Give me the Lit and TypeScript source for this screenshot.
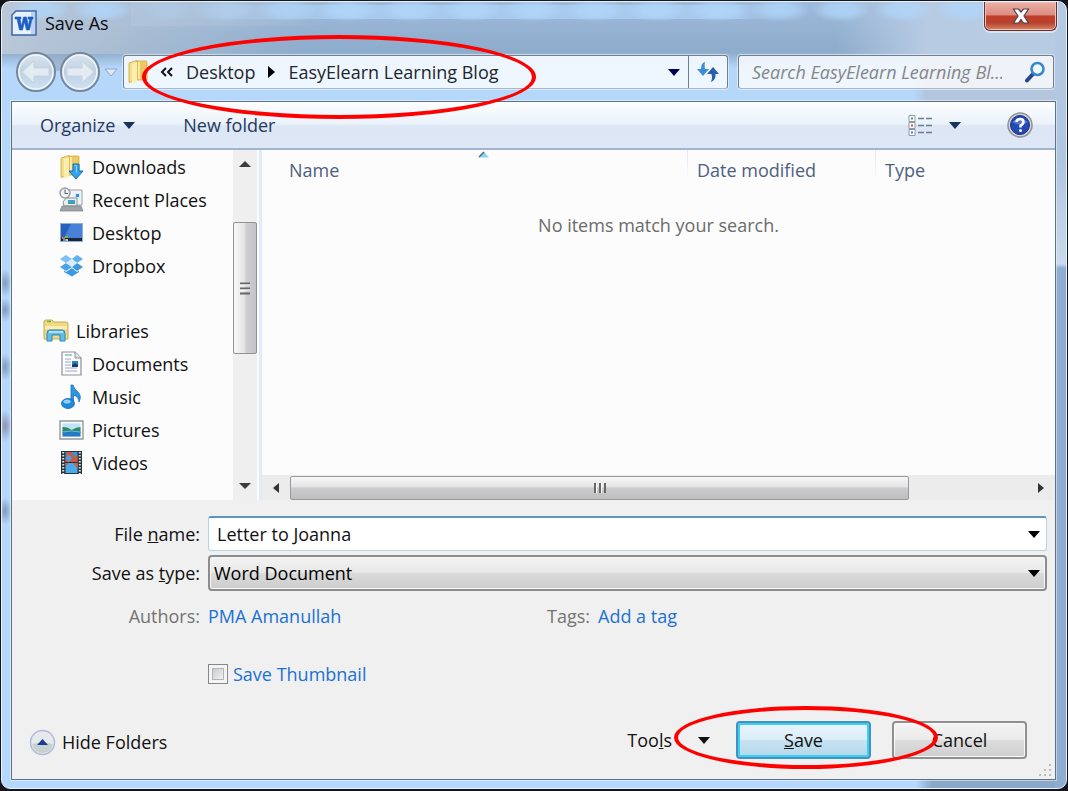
import { LitElement, html, css, svg } from "lit";
import { customElement, property, state } from "lit/decorators.js";
import { classMap } from "lit/directives/class-map.js";

const folder = svg`
  <path d="M2 4 10 1.500V21L2 23.500Z" fill="#f6df86" stroke="#c9a640" stroke-width=".8"/>
  <path d="M10 2H19Q20 2 20 3V21H10Z" fill="#ecca5f" stroke="#d0ac48" stroke-width=".8"/>
  <path d="M5 5 10 3V23L5 24.500Z" fill="#fbeeb0"/>
  <path d="M12 3v17" stroke="#fff3bf" stroke-width="1.500"/>`;

const icons: Record<string, unknown> = {
  folder,
  downloads: svg`${folder}
    <path d="M14 10h6v7h4l-7 8-7-8h4z" fill="#36a3ee" stroke="#1769b4" stroke-width="1"/>
    <path d="M15.500 11.500h2v7" stroke="#8fd4ff" fill="none"/>`,
  recent: svg`
    <path d="M9 3h14v15H9z" fill="#f2f4f5" stroke="#9a9fa3"/>
    <path d="M15 6h6v6h-6z" fill="#dcecf7"/><path d="M17 7h3v3h-3z" fill="#2c8fd8"/>
    <path d="M4 15 7 11H18v8H5z" fill="#e9eef0" stroke="#8d9498"/>
    <path d="M9 13h7v4H9z" fill="#3f9fd0"/><path d="M9 16h7v1H9z" fill="#3fa36c"/>
    <path d="M3 19h19l2 5H1z" fill="#9da3a7" stroke="#7d8387" stroke-width=".7"/>
    <circle cx="6" cy="6" r="5" fill="#f1f3f4" stroke="#9a9fa3" stroke-width="1.500"/>
    <path d="M6 2.500V6.500H9" stroke="#4c5c74" fill="none"/>`,
  desktop: svg`
    <path d="M1 3h23v19H1z" fill="#8db0d8"/><path d="M2 4h21v14H2z" fill="#2a5fc0"/>
    <path d="M12 4h11v14H5z" fill="#5b93e2" opacity=".65"/>
    <path d="M2 18h21v3H2z" fill="#1d2733"/><path d="M3 17h3v2H3z" fill="#e4683a"/>
    <path d="M6 16h3v2H6z" fill="#6cc04a"/><path d="M4 19h3v2H4z" fill="#37a1ef"/><path d="M7 19h2v2H7z" fill="#f3c63e"/>`,
  dropbox: svg`
    <path d="M7 2 13 6 7 10 1 6Z" fill="#7fc0f3"/><path d="M18 2 24 6 18 10 13 6Z" fill="#5fb0ee"/>
    <path d="M7 10 13 14 7 18 1 14Z" fill="#4aa3e8"/><path d="M18 10 24 14 18 18 13 14Z" fill="#3d97e0"/>
    <path d="M13 6 18 10 13 14 7 10Z" fill="#d6ecfb"/>
    <path d="M5 17.500 7 19 13 15 18 19 20 17.500V19L13 23.500 5 19Z" fill="#3c99e4"/>`,
  libraries: svg`
    <path d="M1 4Q1 2 3 2H9L11 4H23Q25 4 25 6V21H1Z" fill="#f1d983" stroke="#c8aa50"/>
    <path d="M2 8h22v3H2z" fill="#fbeeb5"/><path d="M4 3.500h4" stroke="#69bb3c" stroke-width="1.500"/>
    <path d="M4 23V15Q4 12 7 12H19Q22 12 22 15V23H17V17H9V23Z" fill="#63bde8" stroke="#2d87bd"/>
    <path d="M6 14h14" stroke="#c8ecfb" stroke-width="1.500"/>`,
  documents: svg`
    <path d="M3 1H16L22 7V24H3Z" fill="#fdfdfe" stroke="#8b9095" stroke-width="1.200"/>
    <path d="M16 1V7H22" fill="#dfe4e8" stroke="#8b9095"/>
    <path d="M6 8h6M6 11h6M6 14h6M6 17h12M6 20h12" stroke="#99a6c4"/>
    <path d="M6 4h7" stroke="#45a09e"/><path d="M13 10h6v6h-6z" fill="#2583c6"/><path d="M13 14l3-2 3 2v2h-6z" fill="#173f6b"/>`,
  music: svg`
    <path d="M12 19V1H14Q15 5 19 8 23 12 20 18 20 13 14.500 11V19Z" fill="#2f95dc" stroke="#1b74bb" stroke-width=".8"/>
    <ellipse cx="9" cy="19.500" rx="6.500" ry="5" fill="#218ad8" stroke="#1769b4" stroke-width=".8"/>
    <ellipse cx="8" cy="17.500" rx="3.500" ry="2" fill="#8bd0f6"/>`,
  pictures: svg`
    <path d="M1 4h23v18H1z" fill="#fafafa" stroke="#94999d" stroke-width="1.400"/>
    <path d="M3.500 6.500h18v13h-18z" fill="#bfe4f8"/><path d="M3.500 10q6 0 9 3 5-3 9-3v6h-18z" fill="#2f8a63"/>
    <path d="M3.500 15h18v4.500h-18z" fill="#2479c4"/><path d="M3.500 15q9-2 18 0" stroke="#69b8e8" fill="none"/>`,
  videos: svg`
    <path d="M2 1h21v23H2z" fill="#2b3237"/><path d="M6.500 2h12v10h-12z" fill="#3d93d8"/>
    <path d="M6.500 13h12v10h-12z" fill="#4aa8ec"/>
    <path d="M8 2h5l2 5 3.500-2v7h-12V8z" fill="#c65b42"/><path d="M9 4l4 4-3 4-3.500-3z" fill="#4f9fe0"/>
    <path d="M14 13h4.500v6l-2-3zM6.500 13h3l-3 4z" fill="#d0614a"/>
    <path d="M4.200 2v22M20.800 2v22" stroke="#d5ece4" stroke-width="2" stroke-dasharray="1.500 1.500"/>`,
};

@customElement("folder-icon")
class FolderIcon extends LitElement {
  @property() name = "";
  static styles = css`
    :host { display: block; width: 26px; height: 26px; flex: none; }
    svg { display: block; }
  `;
  render() {
    return html`<svg width="26" height="26" viewBox="0 0 26 26" aria-hidden="true">${icons[this.name]}</svg>`;
  }
}

interface Place { id: string; label: string; depth: number; gap?: boolean }

const places: Place[] = [
  { id: "downloads", label: "Downloads", depth: 1 },
  { id: "recent", label: "Recent Places", depth: 1 },
  { id: "desktop", label: "Desktop", depth: 1 },
  { id: "dropbox", label: "Dropbox", depth: 1 },
  { id: "libraries", label: "Libraries", depth: 0, gap: true },
  { id: "documents", label: "Documents", depth: 1 },
  { id: "music", label: "Music", depth: 1 },
  { id: "pictures", label: "Pictures", depth: 1 },
  { id: "videos", label: "Videos", depth: 1 },
];

const caret = html`<svg class="caret" width="12" height="7" viewBox="0 0 12 7" aria-hidden="true"><path d="M0 0H12L6 7Z" fill="currentColor"/></svg>`;

@customElement("app-root")
class AppRoot extends LitElement {
  @state() private fileName = "Letter to Joanna";

  static styles = css`
    :host {
      display: flex; min-height: 100vh; box-sizing: border-box; padding: 1px 1px 2px;
      background: #15151c; font: 18px/24px "Open Sans", "Noto Sans", sans-serif; color: #111;
    }
    * { box-sizing: border-box; }
    button, input, select { font: inherit; color: inherit; margin: 0; padding: 0; border: 0; background: none; }
    button { display: flex; align-items: center; cursor: pointer; }
    svg { display: block; flex: none; }
    a { color: #1c70d4; text-decoration: none; }
    .window {
      flex: 1; min-width: 0; display: flex; flex-direction: column; padding: 0 10px 8px 9px;
      border: 1px solid #e9f1f9; border-radius: 9px;
      background:
        radial-gradient(ellipse 7px 14px at 3px 281px, #7f9cba, transparent) no-repeat left top / 9px 100%,
        radial-gradient(ellipse 7px 12px at 3px 308px, #7f9cba, transparent) no-repeat left top / 9px 100%,
        radial-gradient(ellipse 7px 14px at 3px 365px, #7f9cba, transparent) no-repeat left top / 9px 100%,
        radial-gradient(ellipse 7px 16px at 3px 424px, #8c93ae, transparent) no-repeat left top / 9px 100%,
        radial-gradient(ellipse 7px 14px at 3px 509px, #7f9cba, transparent) no-repeat left top / 9px 100%,
        linear-gradient(#b4cae3, #b4cae3 30px, #b0c6df 160px, #c9daec 262px, #8fadcf 266px) right top / 11px 100% no-repeat,
        linear-gradient(90deg, transparent, #8aa8c9 16px) right bottom / 150px 9px no-repeat,
        linear-gradient(90deg, transparent, #b7cbe3 90px) right top / 230px 54px no-repeat,
        linear-gradient(90deg, transparent, #b4c6dd 12px) right 54px / 152px 46px no-repeat,
        linear-gradient(90deg, #b9c7d7, rgba(180, 196, 214, 0) 300px) left top / 100% 52px no-repeat,
        linear-gradient(#9dbbdb, #96b3d3 24px, #8dabcb 50px, #b5d7fa 66px, #b5d8fe);
    }
    .titlebar {
      display: flex; align-items: flex-start; justify-content: space-between; height: 53px;
      background:
        linear-gradient(90deg, rgba(176, 196, 218, .9), transparent 200px) 120px 0 / 240px 24px no-repeat,
        radial-gradient(ellipse 30px 12px at 50% 40%, rgba(176, 214, 250, .85), rgba(176, 214, 250, .7) 50%, transparent) 130px 0 / 59px 20px space no-repeat,
        linear-gradient(90deg, transparent, rgba(172, 209, 244, .75) 200px, rgba(172, 209, 244, .75) calc(100% - 40px), transparent) 120px 3px / calc(100% - 400px) 14px no-repeat;
    }
    .title { display: flex; align-items: center; gap: 8px; margin: 0; padding-top: 8px; font: inherit; color: #0c0c10; }
    .close {
      width: 73px; height: 29px; justify-content: center; margin-right: -1px;
      border: 1px solid #63302f; border-top: 0; border-radius: 0 0 6px 6px;
      background: linear-gradient(#eab0a6, #dd8c80 46%, #c23c29 50%, #b8432f 75%, #d58869);
      box-shadow: inset 0 0 0 1px #f0c2b8, 0 1px 0 1px rgba(255, 255, 255, .5);
    }
    .nav { display: flex; align-items: center; height: 34px; padding-right: 2px; }
    .history { display: flex; align-items: center; width: 112px; margin: -4px 0; }
    .field {
      display: flex; align-items: center; height: 34px; min-width: 0;
      border: 1px solid #727f8e; border-bottom-color: #a9b9cc; border-radius: 3px;
      background: rgba(243, 249, 255, .92); box-shadow: 0 0 0 1px rgba(255, 255, 255, .5);
    }
    .address { position: relative; flex: 1; color: #22262c; }
    .crumbs { display: flex; align-items: center; flex: 1; min-width: 0; gap: 13px; padding-left: 3px; }
    .crumbs button { white-space: nowrap; }
    .chevrons { margin-left: -6px; }
    .drop { padding: 12px 8px; color: #000052; }
    .refresh { height: 32px; width: 39px; justify-content: center; border-left: 1px solid #727f8e; }
    .search { flex: 0 1 316px; margin-left: 10px; padding: 0 7px 0 13px; gap: 6px; background: rgba(248, 250, 253, .86); }
    .search input { flex: 1; min-width: 0; height: 30px; font-style: italic; outline: none; }
    .search input::placeholder { color: #83868b; opacity: 1; }
    .client { flex: 1; display: flex; flex-direction: column; margin-top: 12px; border: 1px solid #5f7186; background: #f0f0f0; box-shadow: 0 0 0 1px rgba(255, 255, 255, .45); }
    .toolbar {
      display: flex; align-items: center; height: 48px; padding: 0 22px 0 28px; color: #26395f;
      border-bottom: 2px solid #a3b5ce;
      background: linear-gradient(#fdfeff, #eaf2fa 48%, #dce6f4 52%, #dde7f5);
    }
    .toolbar button { gap: 8px; }
    .toolbar .caret { color: #17335c; }
    .new { margin-left: 48px; }
    .views { margin-left: auto; margin-right: 46px; }
    .views .caret { margin-left: 8px; }
    .panes { display: flex; height: 350px; background: #fcfcfc; }
    .places { width: 221px; flex: none; margin: 0; padding: 0; list-style: none; }
    .place button { height: 33px; gap: 7px; padding-left: 47px; width: 100%; }
    .root button { padding-left: 31px; }
    .gap { margin-top: 32px; }
    .vscroll { display: flex; flex-direction: column; align-items: center; width: 24px; background: #efefef; }
    .vscroll .arrow { height: 28px; justify-content: center; }
    .vtrack { flex: 1; width: 100%; padding-top: 44px; }
    .vthumb {
      display: flex; align-items: center; justify-content: center; height: 132px;
      border: 1px solid #8f9194; border-radius: 2px; background: linear-gradient(90deg, #f7f7f7, #e6e6e8 45%, #cfcfd3 55%, #c3c3c8);
    }
    .list { flex: 1; min-width: 0; display: flex; flex-direction: column; margin-left: 2px; border-left: 3px solid #dfebf8; }
    table { width: 100%; table-layout: fixed; border-collapse: collapse; }
    .name { width: 425px; } .date { width: 188px; }
    th {
      height: 32px; padding: 8px 0 0 10px; text-align: left; font-weight: 400; color: #4c607f;
      background: linear-gradient(#dce8f6, #fcfcfc) left top / 1px 100% no-repeat;
    }
    th:first-child { position: relative; padding-left: 27px; background: none; }
    .sort { position: absolute; top: 1px; left: 216px; }
    td { padding: 31px 0 0; text-align: center; color: #6b6b6b; }
    .hscroll { display: flex; align-items: center; height: 25px; margin-top: auto; background: #ececec; }
    .hscroll .arrow { justify-content: center; width: 28px; height: 24px; }
    .htrack { flex: 1; }
    .hthumb {
      display: flex; align-items: center; justify-content: center; width: 84%; height: 24px;
      border: 1px solid #98999b; border-radius: 2px; background: linear-gradient(#f6f6f6, #e4e4e5 45%, #cbcbcd 50%, #bfbfc2);
    }
    .form { display: grid; grid-template-columns: 188px minmax(0, 1fr); column-gap: 8px; row-gap: 4px; padding: 16px 8px 0 0; align-items: center; }
    .label { text-align: right; white-space: nowrap; }
    .muted { color: #737373; }
    .combo { display: flex; align-items: center; height: 35px; border: 1px solid #b5d3ea; border-top: 2px solid #5c94c2; border-radius: 3px; background: #fff; }
    .combo input { flex: 1; min-width: 0; height: 30px; padding-left: 8px; outline: none; }
    .combo button { padding: 10px 6px; color: #000; }
    .type { display: grid; align-items: center; color: #000; }
    .type select {
      grid-area: 1 / 1; appearance: none; width: 100%; height: 36px; padding-left: 4px;
      border: 2px solid #8c8c8c; border-radius: 4px; background: linear-gradient(#f3f3f3, #e8e8e8 48%, #dadada 52%, #cdcdcd);
      box-shadow: inset 0 0 0 1px #f8f8f8;
    }
    .type .caret { grid-area: 1 / 1; justify-self: end; margin-right: 7px; pointer-events: none; }
    .meta { display: grid; grid-template-columns: minmax(0, 339px) 1fr; height: 42px; align-items: center; }
    .tags { display: flex; gap: 8px; }
    .check { grid-column: 2; display: flex; align-items: center; gap: 5px; color: #1c70d4; padding-top: 21px; }
    .check input {
      appearance: none; width: 20px; height: 20px; border: 1px solid #85888c;
      background: linear-gradient(135deg, #c3c8cf, #f6f6f6) center / 12px 12px no-repeat, #f4f4f4;
      outline: 1px solid #b3b5b8; outline-offset: -5px;
    }
    .footer { display: flex; align-items: center; justify-content: space-between; margin-top: auto; padding: 0 28px 20px 17px; }
    .hide { gap: 6px; padding-top: 4px; }
    .actions { position: relative; display: flex; align-items: center; }
    .tools { gap: 26px; margin-right: 26px; }
    .push {
      justify-content: center; width: 135px; height: 38px; border: 2px solid #8f8f8f; border-radius: 4px;
      background: linear-gradient(#f3f3f3, #ebebeb 48%, #dcdcdc 52%, #cfcfcf); box-shadow: inset 0 0 0 1px #f9f9f9;
    }
    .primary {
      margin-right: 21px; border-color: #3f93bf;
      background: linear-gradient(#eaf4fa, #dceef7 48%, #c6e2f1 52%, #b5d8ea); box-shadow: inset 0 0 0 2px #3fcdf3;
    }
    .ring { position: absolute; border: 4px solid #ff0000; border-radius: 50%; pointer-events: none; }
    .ring-path { left: 18px; top: -21px; width: 394px; height: 84px; }
    .ring-save { right: 89px; top: -15px; width: 264px; height: 63px; }
    .grip { position: absolute; right: -25px; bottom: -18px; }
  `;

  private place(p: Place) {
    return html`<li class=${classMap({ place: true, root: p.depth === 0, gap: !!p.gap })}>
      <button type="button"><folder-icon name=${p.id}></folder-icon>${p.label}</button>
    </li>`;
  }

  render() {
    return html`
      <main class="window">
        <header class="titlebar">
          <h1 class="title">
            <svg width="26" height="26" viewBox="0 0 26 26" aria-hidden="true">
              <path d="M5 1H25V25H1V5Z" fill="#e8f0fb" stroke="#3a66a8" stroke-width="1.500"/>
              <path d="M20 2h4v22h-4z" fill="#bdd2f0"/>
              <path d="M4 7H10V9H9L10.500 16 12.500 7H15.500L17.500 16 18.500 9H17V7H22V9H21L18.500 20H15.500L13.500 12 11.500 20H8.500L6 9H4Z" fill="#1f5fc4" stroke="#1f5fc4" stroke-width=".6"/>
            </svg>
            Save As
          </h1>
          <button class="close" type="button" aria-label="Close">
            <svg width="18" height="16" viewBox="0 0 18 16"><path d="M1.500 1H6.500L9 4 11.500 1H16.500L12 8 16.500 15H11.500L9 11.500 6.500 15H1.500L6 8Z" fill="#fff" stroke="#4b4352" stroke-width="1.200"/></svg>
          </button>
        </header>

        <nav class="nav" aria-label="Location">
          <div class="history">
            <svg width="108" height="42" viewBox="0 0 108 42" role="img" aria-label="Back and forward">
              <defs><linearGradient id="orb" x2="0" y2="1"><stop stop-color="#dbe5ef"/><stop offset=".5" stop-color="#bfd0e2"/><stop offset="1" stop-color="#cfe3f7"/></linearGradient></defs>
              <path d="M24 1Q46 6 68 1V20H24Z" fill="#94a9c0" opacity=".6"/>
              <circle cx="25" cy="21" r="19" fill="url(#orb)" stroke="#75879c" stroke-width="2"/>
              <circle cx="69" cy="21" r="19" fill="url(#orb)" stroke="#75879c" stroke-width="2"/>
              <circle cx="25" cy="21" r="17" fill="none" stroke="#eef5fb" stroke-width="1.500"/>
              <circle cx="69" cy="21" r="17" fill="none" stroke="#eef5fb" stroke-width="1.500"/>
              <path d="M11 21 23 10V17H38V25H23V32Z" fill="#e3ebf3" stroke="#c6d3e0"/>
              <path d="M83 21 71 10V17H56V25H71V32Z" fill="#e3ebf3" stroke="#c6d3e0"/>
              <path d="M94 18H106L100 25Z" fill="#dceafa" stroke="#8ea5bf"/>
            </svg>
          </div>
          <div class="field address">
            <div class="crumbs">
              <folder-icon name="folder"></folder-icon>
              <svg class="chevrons" width="13" height="10" viewBox="0 0 13 10" aria-hidden="true"><path d="M6 1 2 5 6 9M12 1 8 5 12 9" fill="none" stroke="#111" stroke-width="2"/></svg>
              <button type="button">Desktop</button>
              <svg width="7" height="12" viewBox="0 0 7 12" aria-hidden="true"><path d="M0 0 7 6 0 12Z" fill="#000"/></svg>
              <button type="button">EasyElearn Learning Blog</button>
            </div>
            <button class="drop" type="button" aria-label="Previous locations">${caret}</button>
            <button class="refresh" type="button" aria-label="Refresh">
              <svg width="24" height="22" viewBox="0 0 24 22">
                <path d="M9 1Q5 2 5 8H1L7 15 13 8H9Q8 4 9 1Z" fill="#3d8ed6"/>
                <path d="M15 21Q20 19 19.500 13H23L17 6 11 13H15.500Q17 17 15 21Z" fill="#2560b0"/>
              </svg>
            </button>
            <span class="ring ring-path"></span>
          </div>
          <div class="field search">
            <input type="search" aria-label="Search" placeholder="Search EasyElearn Learning Bl..." />
            <svg width="22" height="22" viewBox="0 0 22 22" aria-hidden="true">
              <path d="M9 13 3 19.500" stroke="#26468f" stroke-width="4" stroke-linecap="round"/>
              <circle cx="13.500" cy="8" r="6" fill="#eef8ff" stroke="#3487cf" stroke-width="2.500"/>
            </svg>
          </div>
        </nav>

        <section class="client">
          <div class="toolbar">
            <button type="button">Organize ${caret}</button>
            <button class="new" type="button">New folder</button>
            <button class="views" type="button" aria-label="Change view">
              <svg width="25" height="21" viewBox="0 0 25 21">
                <path d="M1 .5H7V6.500H1ZM1 7.500H7V13.500H1ZM1 14.500H7V20.500H1Z" fill="#fff" stroke="#8a98ac"/>
                <path d="M3 2.500h2v2H3z" fill="#4ba152"/><path d="M3 9.500h2v2H3z" fill="#e2492f"/><path d="M3 16.500h2v2H3z" fill="#3b82dd"/>
                <path d="M10 3.500h6M18 3.500h6M10 10.500h6M18 10.500h6M10 17.500h6M18 17.500h6" stroke="#687b93" stroke-width="1.500"/>
              </svg>
              ${caret}
            </button>
            <button type="button" aria-label="Help">
              <svg width="26" height="26" viewBox="0 0 26 26">
                <circle cx="13" cy="13" r="12" fill="#d7d9dc" stroke="#8e9196" stroke-width="1.500"/>
                <circle cx="13" cy="13" r="9.500" fill="#2449b4" stroke="#18307e"/>
                <path d="M5 10Q13 3 21 10 13 15 5 10Z" fill="#6f96e6" opacity=".6"/>
                <path d="M9.500 10Q9.500 7 13 7 16.500 7 16.500 10 16.500 12 13.500 13.500V15.500" fill="none" stroke="#fff" stroke-width="2.500"/>
                <circle cx="13.500" cy="18.500" r="1.500" fill="#fff"/>
              </svg>
            </button>
          </div>

          <div class="panes">
            <ul class="places">${places.map((p) => this.place(p))}</ul>
            <div class="vscroll">
              <button class="arrow" type="button" aria-label="Scroll up"><svg width="12" height="6" viewBox="0 0 12 6"><path d="M0 6H12L6 0Z" fill="#3c3c3c"/></svg></button>
              <div class="vtrack"><div class="vthumb">
                <svg width="12" height="14" viewBox="0 0 12 14"><path d="M1 2.500h10M1 7.500h10M1 12.500h10" stroke="#666" stroke-width="2"/><path d="M1 4h10M1 9h10" stroke="#fff"/></svg>
              </div></div>
              <button class="arrow" type="button" aria-label="Scroll down"><svg width="12" height="6" viewBox="0 0 12 6"><path d="M0 0H12L6 6Z" fill="#3c3c3c"/></svg></button>
            </div>
            <div class="list">
              <table>
                <colgroup><col class="name" /><col class="date" /><col /></colgroup>
                <thead><tr>
                  <th scope="col">Name<svg class="sort" width="12" height="7" viewBox="0 0 12 7" aria-hidden="true"><path d="M1 6.500H11L6 1Z" fill="#8fd0ea"/><path d="M1 6 6 1" stroke="#3c6f8c" stroke-width="1.500"/></svg></th>
                  <th scope="col">Date modified</th>
                  <th scope="col">Type</th>
                </tr></thead>
                <tbody><tr><td colspan="3">No items match your search.</td></tr></tbody>
              </table>
              <div class="hscroll">
                <button class="arrow" type="button" aria-label="Scroll left"><svg width="6" height="10" viewBox="0 0 6 10"><path d="M6 0V10L0 5Z" fill="#333"/></svg></button>
                <div class="htrack"><div class="hthumb">
                  <svg width="14" height="12" viewBox="0 0 14 12"><path d="M2 1v10M7 1v10M12 1v10" stroke="#666" stroke-width="2"/><path d="M3.500 1v10M8.500 1v10" stroke="#fff"/></svg>
                </div></div>
                <button class="arrow" type="button" aria-label="Scroll right"><svg width="6" height="10" viewBox="0 0 6 10"><path d="M0 0V10L6 5Z" fill="#333"/></svg></button>
              </div>
            </div>
          </div>

          <div class="form">
            <label class="label" for="file">File <u>n</u>ame:</label>
            <div class="combo">
              <input id="file" type="text" .value=${this.fileName}
                @input=${(e: Event) => { this.fileName = (e.target as HTMLInputElement).value; }} />
              <button type="button" aria-label="Recent names">${caret}</button>
            </div>
            <label class="label" for="type">Save as <u>t</u>ype:</label>
            <div class="type">
              <select id="type"><option>Word Document</option></select>
              ${caret}
            </div>
            <span class="label muted">Authors:</span>
            <div class="meta">
              <a href="#authors">PMA Amanullah</a>
              <div class="tags"><span class="muted">Tags:</span><a href="#tags">Add a tag</a></div>
            </div>
            <label class="check"><input type="checkbox" />Save Thumbnail</label>
          </div>

          <footer class="footer">
            <button class="hide" type="button">
              <svg width="27" height="27" viewBox="0 0 27 27" aria-hidden="true">
                <circle cx="13.500" cy="13.500" r="12" fill="#e6eaec" stroke="#b3b9da" stroke-width="1.500"/>
                <path d="M3 15Q13 12 24 15 22 24 13.500 24 5 24 3 15Z" fill="#c9d1d0"/>
                <path d="M8 16H19L13.500 10Z" fill="#1f3c94"/>
              </svg>
              Hide Folders
            </button>
            <div class="actions">
              <button class="tools" type="button"><span>Too<u>l</u>s</span>${caret}</button>
              <button class="push primary" type="button"><span><u>S</u>ave</span></button>
              <button class="push" type="button">Cancel</button>
              <span class="ring ring-save"></span>
              <svg class="grip" width="14" height="14" viewBox="0 0 14 14" aria-hidden="true"><path d="M11 1h2v2h-2zM6 6h2v2H6zM11 6h2v2h-2zM1 11h2v2H1zM6 11h2v2H6zM11 11h2v2h-2z" fill="#bcbcbc"/></svg>
            </div>
          </footer>
        </section>
      </main>
    `;
  }
}
